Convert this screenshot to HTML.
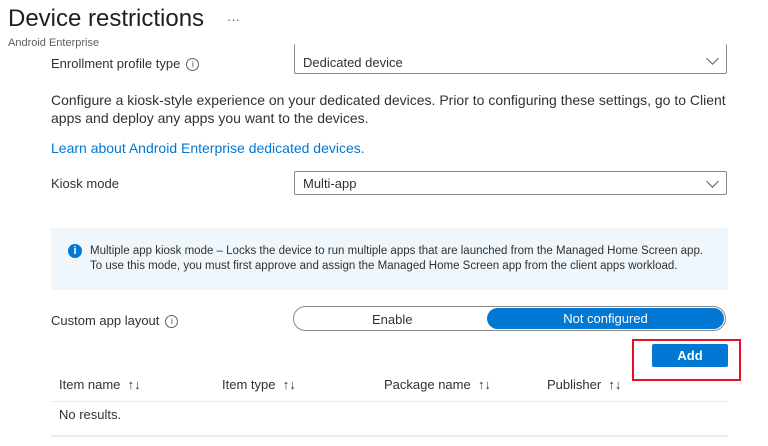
<!DOCTYPE html>
<html><head><meta charset="utf-8"><style>
body{margin:0;width:768px;height:446px;background:#fff;font-family:"Liberation Sans",sans-serif;color:#323130;position:relative;overflow:hidden}
.a{position:absolute;white-space:nowrap}
.dd{position:absolute;left:294px;width:433px;border:1px solid #8a8886;border-radius:2px;box-sizing:border-box;font-size:13px}
.chev{position:absolute;right:9px;width:8px;height:8px;border-right:1.2px solid #605e5c;border-bottom:1.2px solid #605e5c;transform:rotate(45deg)}
.info{display:inline-block;width:11px;height:11px;border:1px solid #605e5c;border-radius:50%;font-size:8px;text-align:center;line-height:11px;vertical-align:middle;margin-left:6px}
.th{position:absolute;top:377px;font-size:13px}
</style></head><body>
<div class="a" style="left:8px;top:5px;font-size:24px;color:#201f1e">Device restrictions</div>
<div class="a" style="left:227px;top:12px;font-size:13px;color:#605e5c">···</div>
<div class="a" style="left:8px;top:37px;font-size:11px;color:#605e5c">Android Enterprise</div>
<div class="a" style="left:51px;top:56px;font-size:13px">Enrollment profile type<span class="info">i</span></div>
<div class="a" style="left:0;top:0;width:768px;height:52px;overflow:hidden"></div>
<div class="dd" style="top:44px;height:30px;border-top:none"><span class="a" style="left:8px;top:11px">Dedicated device</span><span class="chev" style="top:10px"></span></div>
<div class="a" style="left:51px;top:91px;font-size:14px;line-height:18px;color:#323130">Configure a kiosk-style experience on your dedicated devices. Prior to configuring these settings, go to Client<br>apps and deploy any apps you want to the devices.</div>
<div class="a" style="left:51px;top:140px;font-size:14px;color:#0078d4">Learn about Android Enterprise dedicated devices.</div>
<div class="a" style="left:51px;top:176px;font-size:13px">Kiosk mode</div>
<div class="dd" style="top:171px;height:24px"><span class="a" style="left:8px;top:4px">Multi-app</span><span class="chev" style="top:5px"></span></div>
<div class="a" style="left:51px;top:228px;width:677px;height:62px;background:#eff6fc"></div>
<div class="a" style="left:68px;top:244px;width:14px;height:14px;border-radius:50%;background:#0078d4;color:#fff;font-size:11px;font-weight:bold;text-align:center;line-height:14px">i</div>
<div class="a" style="left:90px;top:244px;font-size:11.5px;line-height:15px">Multiple app kiosk mode – Locks the device to run multiple apps that are launched from the Managed Home Screen app.<br>To use this mode, you must first approve and assign the Managed Home Screen app from the client apps workload.</div>
<div class="a" style="left:51px;top:313px;font-size:13px">Custom app layout<span class="info">i</span></div>
<div class="a" style="left:293px;top:306px;width:433px;height:25px;border:1px solid #8a8886;border-radius:13px;box-sizing:border-box;font-size:13px">
<span class="a" style="left:78px;top:5px">Enable</span>
<div class="a" style="left:193px;top:1px;width:237px;height:21px;background:#0078d4;border-radius:11px;color:#fff;text-align:center;line-height:21px">Not configured</div>
</div>
<div class="a" style="left:652px;top:344px;width:76px;height:23px;background:#0078d4;border-radius:2px;color:#fff;font-size:13px;font-weight:bold;text-align:center;line-height:23px">Add</div>
<div class="a" style="left:632px;top:339px;width:105px;height:38px;border:2px solid #e81123"></div>
<div class="th" style="left:59px">Item name&nbsp; ↑↓</div>
<div class="th" style="left:222px">Item type&nbsp; ↑↓</div>
<div class="th" style="left:384px">Package name&nbsp; ↑↓</div>
<div class="th" style="left:547px">Publisher&nbsp; ↑↓</div>
<div class="a" style="left:51px;top:401px;width:677px;height:1px;background:#edebe9"></div>
<div class="a" style="left:59px;top:407px;font-size:13px">No results.</div>
<div class="a" style="left:51px;top:435px;width:677px;height:2px;background:#edebe9"></div>
</body></html>
